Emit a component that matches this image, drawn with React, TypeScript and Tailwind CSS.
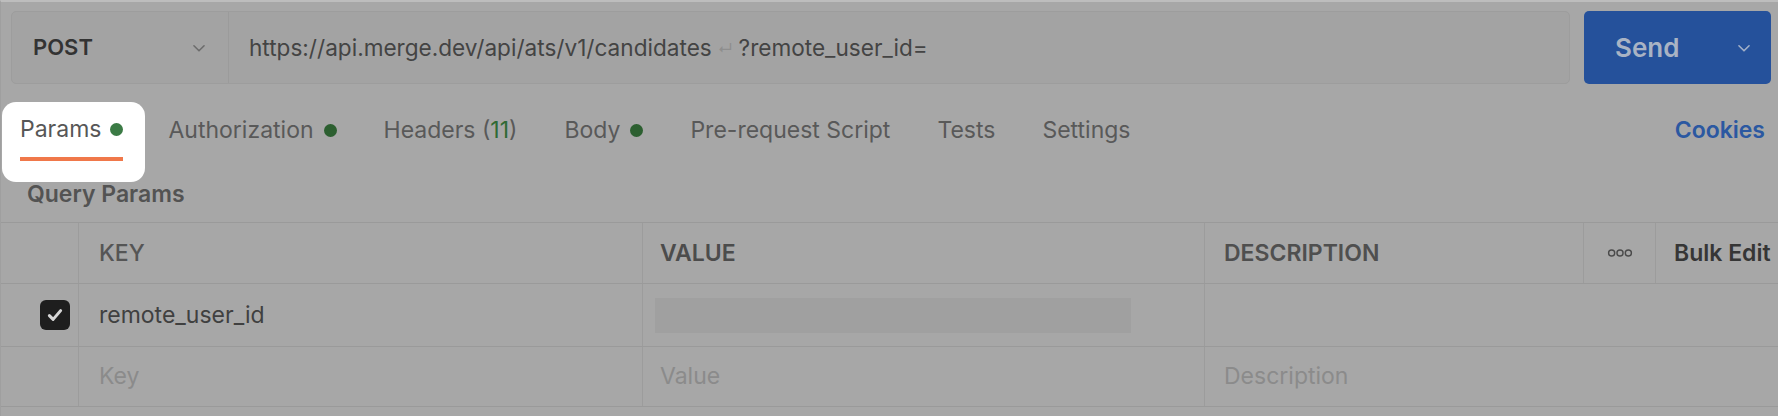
import React from "react";

const Dot = ({ className }: { className: string }) => (
  <span className={`inline-block w-[13px] h-[13px] rounded-full ${className}`} />
);

const Chevron = ({ className }: { className: string }) => (
  <svg viewBox="0 0 16 16" className={className} fill="none" stroke="currentColor" strokeWidth="1.4" strokeLinecap="round" strokeLinejoin="round">
    <path d="M3.5 6l4.5 4.5L12.5 6" />
  </svg>
);

export default function App() {
  const font = { fontFamily: "Inter, 'Noto Sans', 'Liberation Sans', sans-serif" };
  return (
    <div style={font} className="w-[1778px] h-[416px] bg-[#a7a7a7] border-t-2 border-l border-t-[#bdbdbd] border-l-[#9f9f9f] overflow-hidden text-[23px]">
      {/* URL row */}
      <div className="flex pt-[9px] pl-[10px] pr-[7px] gap-[14px]">
        <div className="flex-1 h-[73px] flex rounded-[5px] bg-[#a3a3a3] border border-[#9d9d9d]">
          <div className="w-[217px] flex items-center justify-between pl-[21px] pr-[20px] border-r border-[#9b9b9b]">
            <span className="font-semibold text-[22px] text-[#333333]">POST</span>
            <Chevron className="w-[18px] h-[18px] text-[#6c6c6c]" />
          </div>
          <div className="flex items-center pl-[20px] text-[22.6px] text-[#444444]">
            <span>https://api.merge.dev/api/ats/v1/candidates</span>
            <span className="text-[15px] text-[#8e8e8e] mx-[6px] mt-[4px]">↵</span>
            <span>?remote_user_id=</span>
          </div>
        </div>
        <div className="w-[187px] h-[73px] rounded-[5px] bg-[#25519b] flex items-center pl-[31px] pr-[18px]">
          <span className="text-[26px] font-semibold text-[#a9b3c4] flex-1">Send</span>
          <Chevron className="w-[18px] h-[18px] text-[#a3b1c8]" />
        </div>
      </div>

      {/* Tabs row */}
      <div className="flex items-start mt-[18px] pl-[1px] pr-[13px]">
        <div className="bg-white rounded-[14px] h-[80px] pl-[18px] pr-[22px] flex flex-col">
          <div className="h-[55px] flex items-center gap-[9px] text-[#575757]">
            <span>Params</span>
            <Dot className="bg-[#3b7b45]" />
          </div>
          <div className="h-[4px] bg-[#f0784a]" />
        </div>
        <div className="flex items-center h-[57px] gap-[47px] ml-[23px] text-[#595959]">
          <div className="flex items-center gap-[10px]">
            <span>Authorization</span>
            <Dot className="bg-[#2c5f30]" />
          </div>
          <div>
            Headers (<span className="text-[#2f6a35]">11</span>)
          </div>
          <div className="flex items-center gap-[10px]">
            <span>Body</span>
            <Dot className="bg-[#2c5f30]" />
          </div>
          <div>Pre-request Script</div>
          <div>Tests</div>
          <div>Settings</div>
        </div>
        <div className="ml-auto h-[57px] flex items-center font-semibold text-[#2b58a1]">Cookies</div>
      </div>

      {/* Query Params label */}
      <div className="h-[40px] pl-[26px] font-semibold text-[#535353] leading-[24px]">Query Params</div>

      {/* Table */}
      <div className="border-t border-[#9a9a9a]">
        <div className="grid grid-cols-[78px_564px_562px_379px_72px_1fr] h-[61px] border-b border-[#9a9a9a]">
          <div className="border-r border-[#9c9c9c]" />
          <div className="flex items-center pl-[20px] border-r border-[#9c9c9c] font-medium text-[#555555]">KEY</div>
          <div className="flex items-center pl-[17px] border-r border-[#9c9c9c] font-semibold text-[#4c4c4c]">VALUE</div>
          <div className="flex items-center pl-[19px] border-r border-[#9c9c9c] font-semibold text-[#4f4f4f]">DESCRIPTION</div>
          <div className="flex items-center justify-center border-r border-[#9c9c9c]">
            <svg viewBox="0 0 28 10" className="w-[26px] h-[10px]" fill="none" stroke="#4a4a4a" strokeWidth="1.5">
              <circle cx="5" cy="5" r="3.3" />
              <circle cx="14" cy="5" r="3.3" />
              <circle cx="23" cy="5" r="3.3" />
            </svg>
          </div>
          <div className="flex items-center pl-[18px] font-semibold text-[#363636] whitespace-nowrap">Bulk Edit</div>
        </div>
        <div className="grid grid-cols-[78px_564px_562px_1fr] h-[63px] border-b border-[#9a9a9a]">
          <div className="flex items-center justify-end pr-[8px] border-r border-[#9c9c9c]">
            <div className="w-[30px] h-[30px] rounded-[6px] bg-[#1e1e1e] flex items-center justify-center">
              <svg viewBox="0 0 16 16" className="w-[20px] h-[20px]" fill="none" stroke="#d6d6d6" strokeWidth="2.4" strokeLinecap="round" strokeLinejoin="round">
                <path d="M3.5 8.5l3 3 6-7" />
              </svg>
            </div>
          </div>
          <div className="flex items-center pl-[20px] border-r border-[#9c9c9c] text-[#404040]">remote_user_id</div>
          <div className="flex items-center pl-[12px] border-r border-[#9c9c9c]">
            <div className="w-[476px] h-[35px] bg-[#a0a0a0]" />
          </div>
          <div />
        </div>
        <div className="grid grid-cols-[78px_564px_562px_1fr] h-[60px] border-b border-[#9a9a9a]">
          <div className="border-r border-[#9c9c9c]" />
          <div className="flex items-center pl-[20px] border-r border-[#9c9c9c] text-[#8b8b8b]">Key</div>
          <div className="flex items-center pl-[17px] border-r border-[#9c9c9c] text-[#8b8b8b]">Value</div>
          <div className="flex items-center pl-[19px] text-[#8b8b8b]">Description</div>
        </div>
      </div>
    </div>
  );
}
